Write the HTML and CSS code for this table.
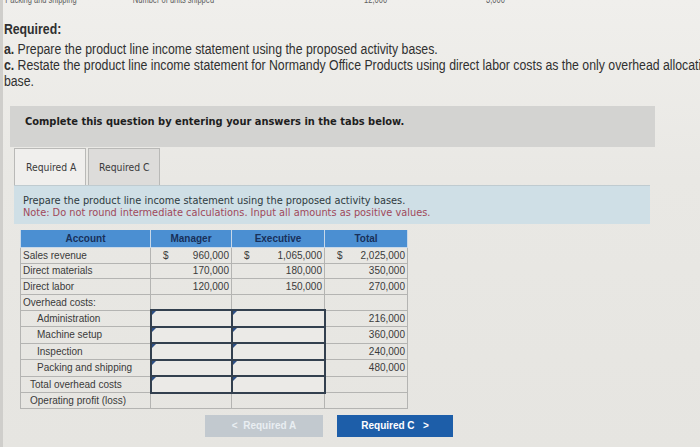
FILE: index.html
```html
<!DOCTYPE html>
<html>
<head>
<meta charset="utf-8">
<link rel="stylesheet" href="styles.css">
</head>
<body>
<div class="page">
  <div class="cutrow">
    <span class="c1">Packing and shipping</span>
    <span class="c2">Number of units shipped</span>
    <span class="c3">12,000</span>
    <span class="c4">3,000</span>
  </div>
  <div class="req">
    <div class="req-title">Required:</div>
    <div class="req-line"><b>a.</b> Prepare the product line income statement using the proposed activity bases.</div>
    <div class="req-line"><b>c.</b> Restate the product line income statement for Normandy Office Products using direct labor costs as the only overhead allocation base.</div>
  </div>
  <div class="complete">Complete this question by entering your answers in the tabs below.</div>
  <div class="tabs">
    <div class="tab active">Required A</div>
    <div class="tab">Required C</div>
  </div>
  <div class="panel">
    <div>Prepare the product line income statement using the proposed activity bases.</div>
    <div class="note">Note: Do not round intermediate calculations. Input all amounts as positive values.</div>
  </div>
  <table class="stmt">
    <colgroup>
      <col class="w-acc"><col class="w-man"><col class="w-exe"><col class="w-tot">
    </colgroup>
    <thead>
      <tr><th>Account</th><th>Manager</th><th>Executive</th><th>Total</th></tr>
    </thead>
    <tbody>
      <tr><td class="acc">Sales revenue</td><td class="num"><span class="d">$</span>960,000</td><td class="num"><span class="d">$</span>1,065,000</td><td class="num"><span class="d">$</span>2,025,000</td></tr>
      <tr><td class="acc">Direct materials</td><td class="num">170,000</td><td class="num">180,000</td><td class="num">350,000</td></tr>
      <tr><td class="acc">Direct labor</td><td class="num">120,000</td><td class="num">150,000</td><td class="num">270,000</td></tr>
      <tr><td class="acc">Overhead costs:</td><td></td><td></td><td></td></tr>
      <tr><td class="acc ind">Administration</td><td class="inp"></td><td class="inp"></td><td class="num">216,000</td></tr>
      <tr><td class="acc ind">Machine setup</td><td class="inp"></td><td class="inp"></td><td class="num">360,000</td></tr>
      <tr><td class="acc ind">Inspection</td><td class="inp"></td><td class="inp"></td><td class="num">240,000</td></tr>
      <tr><td class="acc ind">Packing and shipping</td><td class="inp"></td><td class="inp"></td><td class="num">480,000</td></tr>
      <tr><td class="acc sub">Total overhead costs</td><td class="inp"></td><td class="inp"></td><td></td></tr>
      <tr><td class="acc sub">Operating profit (loss)</td><td></td><td></td><td></td></tr>
    </tbody>
  </table>
  <div class="nav">
    <div class="btn prev">&lt;&nbsp;&nbsp;Required A</div>
    <div class="btn next">Required C&nbsp;&nbsp;&nbsp;&gt;</div>
  </div>
</div>
</body>
</html>
```
FILE: styles.css
```css
html, body { margin: 0; padding: 0; }
body {
  width: 700px;
  height: 447px;
  overflow: hidden;
  background: linear-gradient(180deg, #f0efec 0%, #e9e8e4 40%, #e6e5e1 100%);
  font-family: "Liberation Sans", Arial, sans-serif;
  color: #2b2b2b;
}
.page {
  height: 447px;
  border-left: 3px solid #cfcecb;
  box-sizing: border-box;
  overflow: hidden;
}
.cutrow {
  height: 6px;
  overflow: hidden;
  display: flex;
  width: 900px;
  transform: scaleX(0.75);
  transform-origin: left top;
  font-size: 10px;
  color: #5e5e5e;
}
.cutrow span { margin-top: -6px; line-height: 12px; white-space: nowrap; }
.c1 { margin-left: 3px; }
.c2 { margin-left: 75px; }
.c3 { margin-left: 200px; }
.c4 { margin-left: 132px; }

.req {
  margin-top: 15px;
  padding-left: 1px;
  width: 818px;
  transform: scaleX(0.878);
  transform-origin: left top;
  font-size: 14px;
  color: #303030;
}
.req-title { font-weight: bold; line-height: 16px; margin-bottom: 4px; }
.req-line { line-height: 16px; }
.req-line b { font-weight: bold; }

.complete {
  margin: 17px 0 0 7px;
  width: 645px;
  height: 41px;
  box-sizing: border-box;
  padding: 9px 0 0 15px;
  background: #d3d3d1;
  font-family: "DejaVu Sans", Verdana, sans-serif;
  font-stretch: condensed;
  font-weight: bold;
  font-size: 11px;
  color: #1e1e1e;
}
.tabs {
  display: flex;
  margin: 1px 0 0 11px;
  gap: 2px;
  height: 37px;
}
.tab {
  width: 72px;
  box-sizing: border-box;
  border: 1px solid #b9b9b7;
  border-bottom: none;
  background: #dddcda;
  font-family: "DejaVu Sans", Verdana, sans-serif;
  font-stretch: condensed;
  font-size: 10.3px;
  color: #3a3a3a;
  padding-top: 12px;
  padding-left: 10px;
}
.tab.active { background: #f0efed; padding-left: 11px; }
.panel {
  margin-left: 11px;
  width: 636px;
  height: 39px;
  box-sizing: border-box;
  padding: 9px 0 0 9px;
  background: #cfdfe6;
  border-top: 1px solid #bfcbd0;
  font-family: "DejaVu Sans", Verdana, sans-serif;
  font-stretch: condensed;
  font-size: 10.9px;
  line-height: 12px;
  color: #2e3a40;
}
.note { color: #a0485a; }

.stmt {
  margin: 6px 0 0 17px;
  border-collapse: collapse;
  table-layout: fixed;
  width: 387px;
  font-size: 10px;
  color: #3a3a3a;
}
.w-acc { width: 130px; }
.w-man { width: 81px; }
.w-exe { width: 93px; }
.w-tot { width: 83px; }
.stmt th {
  background: #4b8fd2;
  color: #18305a;
  font-weight: bold;
  height: 17px;
  padding: 0;
  border: 1px solid #c8d8e8;
  border-top: none;
  text-align: center;
}
.stmt td {
  height: 14.5px;
  padding: 0 2px;
  border: 1px solid #b4b4b2;
  white-space: nowrap;
  overflow: hidden;
}
.stmt td.acc { padding-left: 2px; text-align: left; }
.stmt td.ind { padding-left: 16px; }
.stmt td.sub { padding-left: 9px; }
.stmt td.num { text-align: right; }
.stmt .d { float: left; padding-left: 10px; }
.stmt td.inp {
  border: 2px solid #33404f;
  position: relative;
  background: #ebeae7;
}
.stmt td.inp::before {
  content: "";
  position: absolute;
  left: 0;
  top: 0;
  border-top: 4px solid #2c4f86;
  border-right: 4px solid transparent;
}

.nav {
  display: flex;
  margin: 6px 0 0 202px;
  gap: 14px;
}
.btn {
  width: 118px;
  height: 22px;
  line-height: 22px;
  text-align: center;
  font-size: 10px;
  font-weight: bold;
}
.prev { background: #c2c9cf; color: #e9eef2; }
.next { background: #1d5ea9; color: #ffffff; width: 116px; }
```
